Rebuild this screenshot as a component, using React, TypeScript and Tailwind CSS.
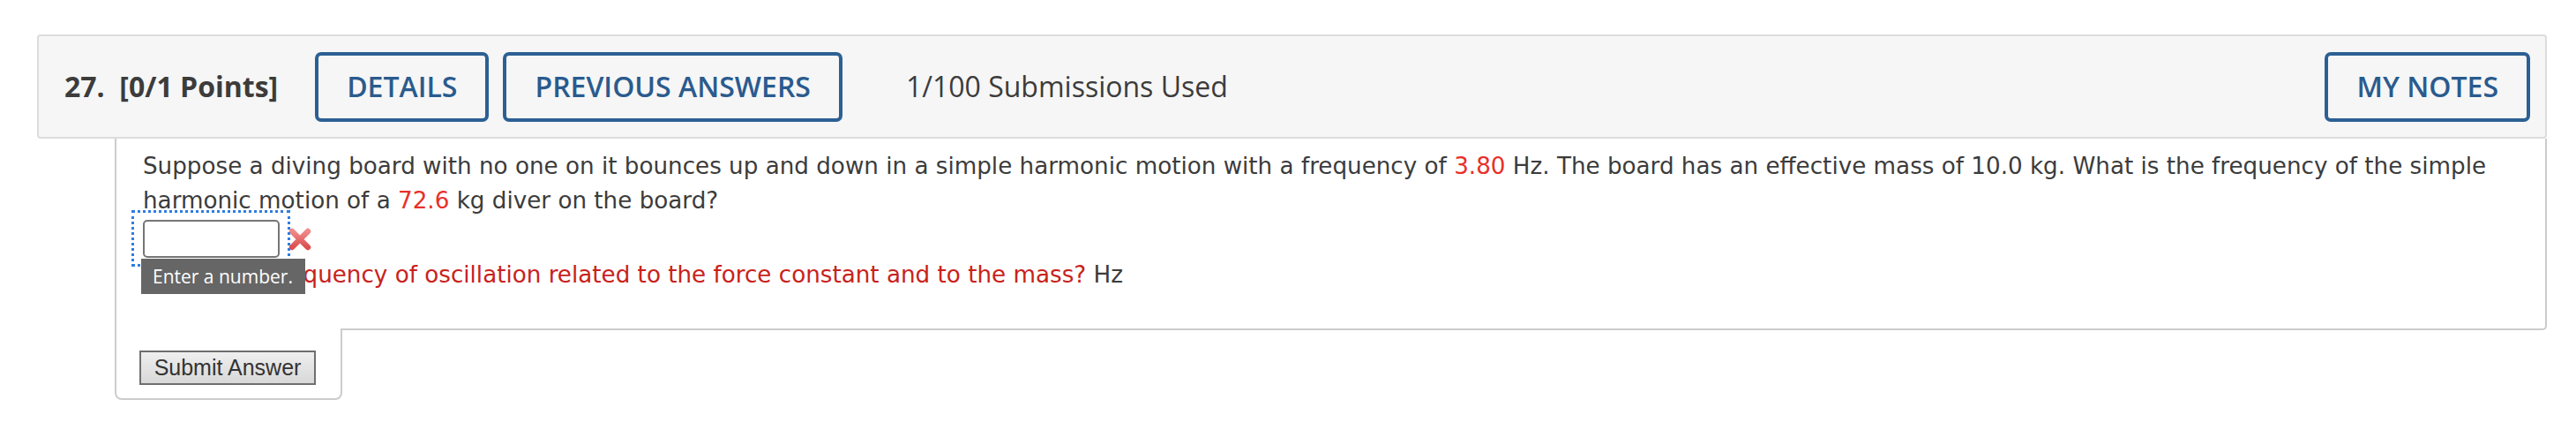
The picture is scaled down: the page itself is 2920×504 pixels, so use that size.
import React from "react";

const OPEN = { fontFamily: '"Open Sans", "Liberation Sans", sans-serif' };
const BODY = { fontFamily: '"DejaVu Sans", Verdana, sans-serif' };

function BlueButton({ children }: { children: React.ReactNode }) {
  return (
    <div
      className="h-[79px] flex items-center px-[32px] border-[4px] border-[#2c6093] rounded-[7px] text-[32px] font-semibold text-[#2a5b8e] whitespace-nowrap"
      style={OPEN}
    >
      {children}
    </div>
  );
}

function RedX() {
  return (
    <svg width="26" height="26" viewBox="0 0 26 26" className="ml-[10px]">
      <defs>
        <linearGradient id="xg" x1="0" y1="0" x2="0" y2="1">
          <stop offset="0" stopColor="#f08a8a" />
          <stop offset="1" stopColor="#dc4f4f" />
        </linearGradient>
      </defs>
      <path d="M4 4 L22 22 M22 4 L4 22" stroke="url(#xg)" strokeWidth="6.5" strokeLinecap="round" />
    </svg>
  );
}

export default function App() {
  return (
    <div className="w-[2920px] h-[504px] bg-white pt-[39px]">
      <div className="ml-[42px] mr-[33px]">
        {/* Header */}
        <div className="h-[118px] flex items-center bg-[#f6f6f6] border-2 border-[#dcdcdc] rounded-[4px] pl-[29px] pr-[17px]">
          <div className="text-[32px] font-bold text-[#3c3c3c] whitespace-pre" style={OPEN}>
            {"27.  [0/1 Points]"}
          </div>
          <div className="ml-[42px]">
            <BlueButton>DETAILS</BlueButton>
          </div>
          <div className="ml-[16px]">
            <BlueButton>PREVIOUS ANSWERS</BlueButton>
          </div>
          <div className="ml-[72px] text-[32px] text-[#3c3c3c]" style={OPEN}>
            1/100 Submissions Used
          </div>
          <div className="ml-auto">
            <BlueButton>MY NOTES</BlueButton>
          </div>
        </div>

        {/* Question body */}
        <div className="ml-[88px] border-l-2 border-r-2 border-b-2 border-[#cccccc] rounded-br-[5px] pt-[12px] pl-[30px] pr-[30px] pb-[41px] text-[26.2px] leading-[39px] text-[#3c3c3c]" style={BODY}>
          <p>
            Suppose a diving board with no one on it bounces up and down in a simple harmonic motion with a frequency of{" "}
            <span className="text-[#e8302a]">3.80</span> Hz. The board has an effective mass of 10.0 kg. What is the frequency of the simple harmonic motion of a{" "}
            <span className="text-[#e8302a]">72.6</span> kg diver on the board?
          </p>
          <div className="mt-[2px] flex items-center">
            <div className="relative w-[155px] h-[43px]">
              <div className="absolute left-[-13px] top-[-11px] w-[180px] h-[64px] border-[3px] border-dotted border-[#2f7de1]" />
              <div className="relative w-[155px] h-[43px] border-2 border-[#767676] rounded-[5px] bg-white" />
              <div
                className="absolute left-[-2px] top-[44px] z-10 w-[186px] h-[40px] bg-[#666666] text-white text-[21px] leading-[40px] pl-[13px] whitespace-nowrap"
                style={OPEN}
              >
                Enter a number.
              </div>
            </div>
            <RedX />
          </div>
          <div>
            <span className="text-[#c8221c]">How is the frequency of oscillation related to the force constant and to the mass?</span> Hz
          </div>
        </div>

        {/* Submit tab */}
        <div className="relative -mt-[2px] ml-[88px] w-[258px] bg-white border-l-2 border-r-2 border-b-2 border-[#cccccc] rounded-b-[8px] pt-[25px] pb-[15px] pl-[26px]">
          <button
            className="w-[200px] h-[39px] border-2 border-[#6f6f6f] bg-gradient-to-b from-[#efefef] to-[#d8d8d8] text-[25px] leading-[35px] text-[#333333] text-center"
            style={{ fontFamily: '"Liberation Sans", Arial, sans-serif' }}
          >
            Submit Answer
          </button>
        </div>
      </div>
    </div>
  );
}
